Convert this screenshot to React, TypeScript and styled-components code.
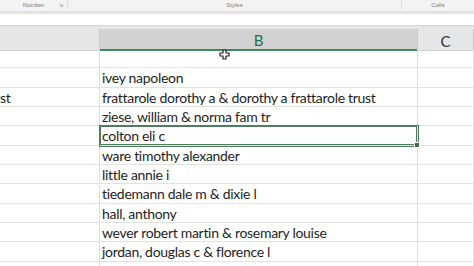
import styled, { createGlobalStyle } from "styled-components";

const GlobalStyle = createGlobalStyle`
  html, body {
    margin: 0;
    padding: 0;
    background: #ffffff;
    overflow: hidden;
  }
  body {
    font-family: "Lato", "Liberation Sans", sans-serif;
  }
`;

const rows: { a?: string; b: string }[] = [
  { b: "" },
  { b: "ivey napoleon" },
  { a: "st", b: "frattarole dorothy a & dorothy a frattarole trust" },
  { b: "ziese, william & norma fam tr" },
  { b: "colton eli c" },
  { b: "ware timothy alexander" },
  { b: "little annie i" },
  { b: "tiedemann dale m & dixie l" },
  { b: "hall, anthony" },
  { b: "wever robert martin & rosemary louise" },
  { b: "jordan, douglas c & florence l" },
  { b: "" },
];

const SELECTED = 4;

function App() {
  return (
    <Page>
      <GlobalStyle />
      <Ribbon>
        <GroupLabel $width={68}>
          <span>Number</span>
          <Launcher>⇲</Launcher>
        </GroupLabel>
        <GroupLabel $width={334}>
          <span>Styles</span>
        </GroupLabel>
        <GroupLabel $width={72} $last>
          <span>Cells</span>
        </GroupLabel>
      </Ribbon>
      <FormulaBar />
      <HeaderRow>
        <HeaderCell />
        <HeaderCell $active>B</HeaderCell>
        <HeaderCell>C</HeaderCell>
      </HeaderRow>
      <Sheet>
        {rows.map((r, i) => (
          <Row key={i}>
            <Cell>{r.a}</Cell>
            <Cell $b $selected={i === SELECTED}>
              {r.b}
              {i === SELECTED && <FillHandle />}
              {i === 0 && (
                <Cursor width="11" height="11" viewBox="0 0 11 11">
                  <path
                    d="M4 1 H7 V4 H10 V7 H7 V10 H4 V7 H1 V4 H4 Z"
                    fill="#ffffff"
                    stroke="#222"
                    strokeWidth="1.2"
                    strokeLinejoin="round"
                  />
                </Cursor>
              )}
            </Cell>
            <Cell />
          </Row>
        ))}
      </Sheet>
    </Page>
  );
}

const Page = styled.div`
  width: 474px;
  height: 266px;
  overflow: hidden;
`;

const Ribbon = styled.div`
  height: 11px;
  display: flex;
  background: #f3f3f3;
  border-bottom: 3px solid #e4e4e4;
`;

const GroupLabel = styled.div<{ $width: number; $last?: boolean }>`
  width: ${(p) => p.$width}px;
  box-sizing: border-box;
  border-right: ${(p) => (p.$last ? "none" : "1px solid #dcdcdc")};
  display: flex;
  align-items: center;
  justify-content: center;
  position: relative;
  font-family: "Liberation Sans", sans-serif;
  font-size: 6px;
  color: #7a7a7a;
  margin: 1px 0 2px;
`;

const Launcher = styled.span`
  position: absolute;
  right: 4px;
  font-size: 5px;
  color: #8a8a8a;
`;

const FormulaBar = styled.div`
  height: 11px;
  background: #ffffff;
  border-bottom: 1px solid #d6d6d6;
`;

const HeaderRow = styled.div`
  display: grid;
  grid-template-columns: 100px 318px 56px;
  height: 23px;
  box-sizing: border-box;
  padding-top: 1px;
  background: #e6e6e6;
`;

const HeaderCell = styled.div<{ $active?: boolean }>`
  box-sizing: border-box;
  margin-top: 2px;
  display: flex;
  align-items: center;
  justify-content: center;
  font-family: "Lato", "Liberation Sans", sans-serif;
  font-size: 15px;
  color: ${(p) => (p.$active ? "#217346" : "#333333")};
  background: ${(p) => (p.$active ? "#d2d2d2" : "#e6e6e6")};
  border-right: 1px solid #c8c8c8;
  border-bottom: ${(p) => (p.$active ? "2px solid #3d8a5a" : "1px solid #d0d0d0")};
  padding-top: 2px;
`;

const Sheet = styled.div`
  display: flex;
  flex-direction: column;
`;

const Row = styled.div`
  display: grid;
  grid-template-columns: 100px 318px 56px;
  height: 19.33px;
  flex-shrink: 0;
`;

const Cell = styled.div<{ $b?: boolean; $selected?: boolean }>`
  position: relative;
  box-sizing: border-box;
  border-right: 1px solid #dedede;
  border-bottom: 1px solid #e2e2e2;
  padding: 1px 0 0 ${(p) => (p.$b ? 2 : 0)}px;
  font-size: 14px;
  letter-spacing: -0.3px;
  line-height: 18px;
  color: #1e1e1e;
  white-space: nowrap;
  overflow: hidden;
  ${(p) =>
    p.$selected &&
    `
    overflow: visible;
    z-index: 1;
    box-shadow: 0 0 0 1px #4f7c5e inset, 0 0 0 1px #4f7c5e;
  `}
`;

const FillHandle = styled.span`
  position: absolute;
  right: -3px;
  bottom: -3px;
  width: 4px;
  height: 4px;
  background: #3a6b4b;
  border: 1px solid #ffffff;
`;

const Cursor = styled.svg`
  position: absolute;
  left: 119px;
  top: 0px;
`;

export default App;
